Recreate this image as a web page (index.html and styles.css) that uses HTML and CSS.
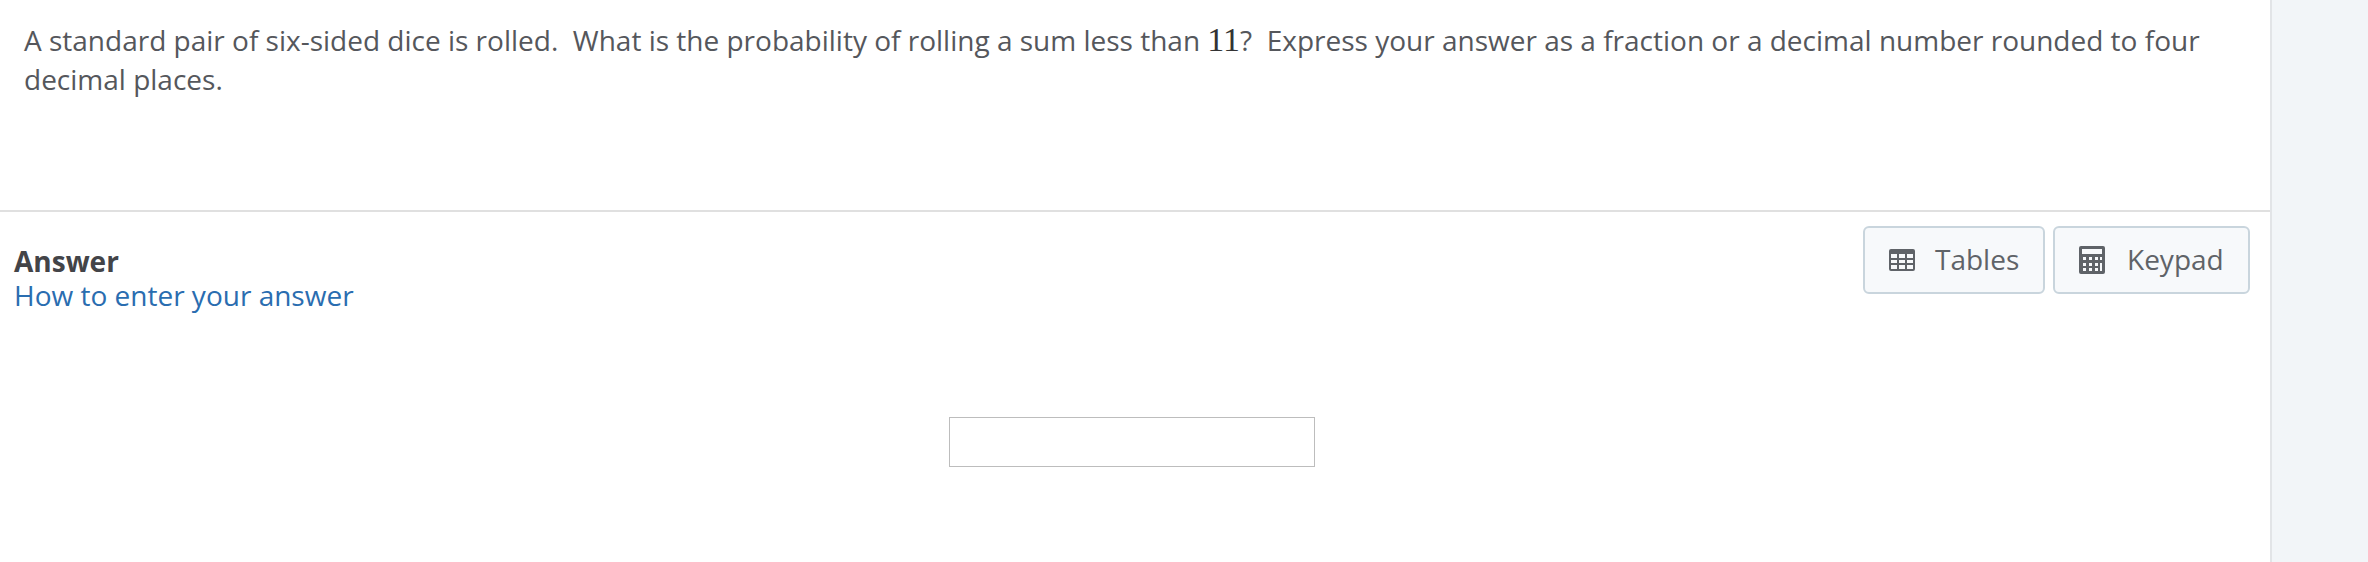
FILE: index.html
```html
<!DOCTYPE html>
<html lang="en">
<head>
<meta charset="utf-8">
<title>Question</title>
<link rel="stylesheet" href="styles.css">
</head>
<body>
<div class="page">
  <main class="main">
    <section class="question">
      <p class="prompt">A standard pair of six-sided dice is rolled.&nbsp; What is the probability of rolling a sum less than <span class="math">11</span>?&nbsp; Express your answer as a fraction or a decimal number rounded to four decimal places.</p>
    </section>
    <section class="answer">
      <div class="answer-head">
        <div class="answer-labels">
          <div class="answer-title">Answer</div>
          <a class="answer-link" href="#">How to enter your answer</a>
        </div>
        <div class="tools">
          <button class="tool tool-tables" type="button">
            <svg class="icon" viewBox="0 0 26 22" width="26" height="22"><path fill="#5f6368" fill-rule="evenodd" d="M2 0h22a2 2 0 0 1 2 2v18a2 2 0 0 1-2 2H2a2 2 0 0 1-2-2V2a2 2 0 0 1 2-2zM2 5v4h6V5zm8 0v4h6V5zm8 0v4h6V5zM2 11v3h6v-3zm8 0v3h6v-3zm8 0v3h6v-3zM2 16v4h6v-4zm8 0v4h6v-4zm8 0v4h6v-4z"/></svg>
            <span class="tool-label">Tables</span>
          </button>
          <button class="tool tool-keypad" type="button">
            <svg class="icon" viewBox="0 0 26 28" width="26" height="28"><path fill="#5f6368" fill-rule="evenodd" d="M2 0h22a2 2 0 0 1 2 2v24a2 2 0 0 1-2 2H2a2 2 0 0 1-2-2V2a2 2 0 0 1 2-2zM3 3v5h20V3zM4 11v3h3v-3zm6 0v3h3v-3zm6 0v3h3v-3zm5 0v3h2v-3zM4 17v3h3v-3zm6 0v3h3v-3zm6 0v3h3v-3zm5 0v8h2v-8zM4 22v3h3v-3zm6 0v3h3v-3zm6 0v3h3v-3z"/></svg>
            <span class="tool-label">Keypad</span>
          </button>
        </div>
      </div>
      <div class="answer-body">
        <input class="answer-input" type="text" aria-label="Answer">
      </div>
    </section>
  </main>
  <aside class="side"></aside>
</div>
</body>
</html>
```
FILE: styles.css
```css
* { box-sizing: border-box; }
html, body { margin: 0; height: 100%; background: #fff; }
body { font-family: "Open Sans", sans-serif; color: #55575c; overflow: hidden; }
.page { display: flex; height: 562px; }
.main { width: 2270px; flex: none; }
.side { flex: 1; background: #f2f5f8; border-left: 2px solid #e2e4e7; }
.question { height: 212px; border-bottom: 2px solid #e0e0e0; padding: 21px 24px 0; }
.prompt { margin: 0; font-size: 28px; line-height: 39px; }
.math { font-family: "Liberation Serif", serif; font-size: 34px; line-height: 1; color: #333; }
.answer { padding: 14px 20px 0 14px; }
.answer-head { display: flex; justify-content: space-between; }
.answer-labels { padding-top: 18px; }
.answer-title { font-size: 28px; font-weight: 700; line-height: 34px; color: #434448; }
.answer-link { display: block; font-size: 28px; line-height: 34px; color: #2a6db0; text-decoration: none; }
.tools { display: flex; gap: 8px; }
.tool { display: flex; align-items: center; gap: 20px; height: 68px; padding: 0 0 0 24px; background: #f7f9fb; border: 2px solid #c9d5dd; border-radius: 6px; font: 400 28px "Open Sans", sans-serif; color: #5f6368; }
.tool-label { padding-bottom: 2px; }
.tool-tables { width: 182px; }
.tool-keypad { width: 197px; gap: 22px; }
.icon { flex: none; }
.answer-body { display: flex; padding: 105px 0 0 935px; }
.answer-input { width: 366px; height: 50px; background: #fff; border: 1px solid #bdbdbd; border-radius: 0; }
```
